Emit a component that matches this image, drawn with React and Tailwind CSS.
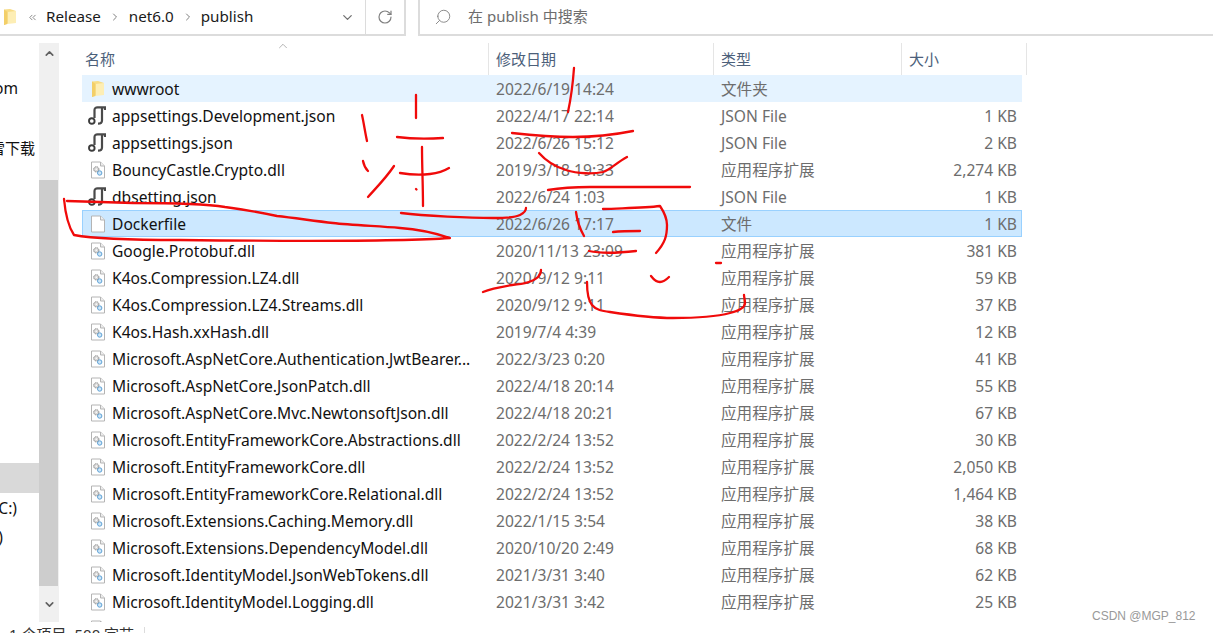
import { ChevronDown, ChevronRight, ChevronUp, ChevronsLeft, RotateCw, Search } from "lucide-react";

const files = [
  ["wwwroot", "2022/6/19 14:24", "文件夹", "", "folder", "hover"],
  ["appsettings.Development.json", "2022/4/17 22:14", "JSON File", "1 KB", "json"],
  ["appsettings.json", "2022/6/26 15:12", "JSON File", "2 KB", "json"],
  ["BouncyCastle.Crypto.dll", "2019/3/18 19:33", "应用程序扩展", "2,274 KB", "dll"],
  ["dbsetting.json", "2022/6/24 1:03", "JSON File", "1 KB", "json"],
  ["Dockerfile", "2022/6/26 17:17", "文件", "1 KB", "file", "selected"],
  ["Google.Protobuf.dll", "2020/11/13 23:09", "应用程序扩展", "381 KB", "dll"],
  ["K4os.Compression.LZ4.dll", "2020/9/12 9:11", "应用程序扩展", "59 KB", "dll"],
  ["K4os.Compression.LZ4.Streams.dll", "2020/9/12 9:11", "应用程序扩展", "37 KB", "dll"],
  ["K4os.Hash.xxHash.dll", "2019/7/4 4:39", "应用程序扩展", "12 KB", "dll"],
  ["Microsoft.AspNetCore.Authentication.JwtBearer...", "2022/3/23 0:20", "应用程序扩展", "41 KB", "dll"],
  ["Microsoft.AspNetCore.JsonPatch.dll", "2022/4/18 20:14", "应用程序扩展", "55 KB", "dll"],
  ["Microsoft.AspNetCore.Mvc.NewtonsoftJson.dll", "2022/4/18 20:21", "应用程序扩展", "67 KB", "dll"],
  ["Microsoft.EntityFrameworkCore.Abstractions.dll", "2022/2/24 13:52", "应用程序扩展", "30 KB", "dll"],
  ["Microsoft.EntityFrameworkCore.dll", "2022/2/24 13:52", "应用程序扩展", "2,050 KB", "dll"],
  ["Microsoft.EntityFrameworkCore.Relational.dll", "2022/2/24 13:52", "应用程序扩展", "1,464 KB", "dll"],
  ["Microsoft.Extensions.Caching.Memory.dll", "2022/1/15 3:54", "应用程序扩展", "38 KB", "dll"],
  ["Microsoft.Extensions.DependencyModel.dll", "2020/10/20 2:49", "应用程序扩展", "68 KB", "dll"],
  ["Microsoft.IdentityModel.JsonWebTokens.dll", "2021/3/31 3:40", "应用程序扩展", "62 KB", "dll"],
  ["Microsoft.IdentityModel.Logging.dll", "2021/3/31 3:42", "应用程序扩展", "25 KB", "dll"],
  ["", "", "", "", "dll"],
];

// hand-drawn red marks, in page coordinates
const marks = [
  "M416 95 L416 118",
  "M574 68 C573 82 571 98 568 112",
  "M362 115 C364 124 365 132 367 141",
  "M363 161 C364 166 366 169 368 171",
  "M394 166 C386 178 376 188 368 197",
  "M397 137 C412 139 428 139 443 138",
  "M422 147 C422 166 423 186 423 206",
  "M400 173 C412 175 422 175 430 174 C438 173 444 171 449 168",
  "M416 189 L416.5 189.5",
  "M401 213 C425 216 470 218 493 218 C505 218 516 217 520 215 C524 213 526 210 526 208",
  "M512 133 C530 135 555 137 573 137 C595 137 618 134 633 131",
  "M539 153 C546 161 556 167 566 170 C578 174 594 174 603 172 C610 170 616 163 627 157",
  "M548 190 C560 188 575 187 590 187 L690 187",
  "M603 209 C625 208 645 208 660 206 C664 212 667 218 667 225 C667 236 665 243 656 253",
  "M576 212 C577 220 580 229 584 236",
  "M613 232 C622 231 632 231 640 231",
  "M589 251 C598 253 618 253 636 251",
  "M716 263 L721 263",
  "M651 276 C654 280 657 282 660 282 C664 282 667 279 669 277",
  "M483 292 C490 289 500 287 512 285 C525 284 534 281 538 277 C540 275 541 272 541 270",
  "M587 282 C587 292 588 300 592 305 C596 310 602 311 610 312 C630 315 655 318 673 318 C695 318 715 317 730 313 C738 311 745 308 745 303 C745 300 744 297 744 295",
  "M64 199 C65 210 68 226 74 235 C95 239 130 240 180 240 C270 241 395 242 450 238 C435 233 415 229 400 228 C375 226 350 225 333 223 C315 221 295 218 277 216 C258 212 240 209 225 207 C200 203 165 203 133 203 L67 201",
];

function FolderIcon() {
  return (
    <svg width="14" height="18" viewBox="0 0 14 18">
      <path d="M1 1.5 L7 1 L13 3 L13 15 L5 15 L1 17 Z" fill="#f8dc85" />
      <path d="M4.5 4 L13 3 L13 15 L4.5 16 Z" fill="#fdeeb5" />
      <path d="M1 1.5 L4.5 4 L4.5 16 L1 17 Z" fill="#f3cf68" />
    </svg>
  );
}

function JsonIcon() {
  return (
    <svg width="18" height="19" viewBox="0 0 18 19" fill="none" className="-ml-[2px]">
      <path d="M6.5 12 L6.5 4 C6.5 2.3 7.7 1.3 9.5 1.3 L17 1.3 L17 4" stroke="#4a4a4a" strokeWidth="2.2" />
      <path d="M14 2 L14 14.5 C14 16.5 12.5 17.6 10 17.6" stroke="#4a4a4a" strokeWidth="2.2" />
      <circle cx="3.8" cy="15" r="2.8" fill="#fff" stroke="#3c3c3c" strokeWidth="1.9" />
    </svg>
  );
}

function PageIcon({ children }) {
  return (
    <svg width="16" height="18" viewBox="0 0 16 18" fill="none">
      <path d="M1.5 1 L10.5 1 L14.5 5 L14.5 17 L1.5 17 Z" fill="#fff" stroke="#b4b4b4" />
      <path d="M10.5 1 L10.5 5 L14.5 5" fill="#eee" stroke="#b4b4b4" />
      {children}
    </svg>
  );
}

function DllIcon() {
  return (
    <PageIcon>
      <circle cx="6.3" cy="8.3" r="2.6" fill="#d8d8d8" stroke="#8c8c8c" strokeDasharray="1.5 0.6" />
      <circle cx="6.3" cy="8.3" r="0.8" fill="#fff" />
      <circle cx="9.7" cy="12" r="2.2" fill="#cfe6f7" stroke="#5ea2d6" />
    </PageIcon>
  );
}

function FileIcon({ type }) {
  if (type === "folder") return <FolderIcon />;
  if (type === "json") return <JsonIcon />;
  if (type === "dll") return <DllIcon />;
  return <PageIcon />;
}

function HeaderCell({ label, className }) {
  return (
    <div className={"flex h-[32px] items-center border-r border-[#e5e5e5] text-[15px] text-[#4c607a] " + className}>
      {label}
    </div>
  );
}

function FileRow({ name, date, type, size, icon, state }) {
  let bg = "border-transparent";
  if (state === "hover") bg = "border-transparent bg-[#e5f3ff]";
  if (state === "selected") bg = "border-[#99d1ff] bg-[#cce8ff]";

  return (
    <div className={"flex h-[27px] w-[940px] items-center border " + bg}>
      <div className="flex w-[406px] items-center">
        <span className="flex w-[29px] shrink-0 justify-center pl-[1px]">
          <FileIcon type={icon} />
        </span>
        <span className="whitespace-nowrap pt-[2px] text-[#111]">{name}</span>
      </div>
      <div className="w-[225px] pt-[2px] pl-[7px] text-[#6d6d6d]">{date}</div>
      <div className="w-[188px] pt-[2px] pl-[7px] text-[#6d6d6d]">{type}</div>
      <div className="w-[115px] pt-[2px] text-right text-[#6d6d6d]">{size}</div>
    </div>
  );
}

export default function App() {
  return (
    <div className="relative flex h-[633px] w-[1213px] flex-col overflow-hidden bg-white font-['Noto_Sans','Noto_Sans_CJK_SC',sans-serif] text-[15.6px] leading-none">
      <header className="flex h-[36px] shrink-0 items-stretch text-[15.2px]">
        <div className="flex w-[406px] items-center border-r-2 border-b-2 border-[#dcdcdc]">
          <span className="ml-[3px] flex w-[14px] justify-center">
            <FolderIcon />
          </span>
          <ChevronsLeft size={11} className="ml-[10px] text-[#808080]" />
          <span className="ml-[8px] -mt-[1px] text-[#1a1a1a]">Release</span>
          <ChevronRight size={12} strokeWidth={2} className="ml-[8px] text-[#808080]" />
          <span className="ml-[8px] -mt-[1px] text-[#1a1a1a]">net6.0</span>
          <ChevronRight size={12} strokeWidth={2} className="ml-[8px] text-[#808080]" />
          <span className="ml-[7px] -mt-[1px] text-[#1a1a1a]">publish</span>
          <span className="flex-1" />
          <ChevronDown size={15} strokeWidth={2} className="mr-[10px] text-[#707070]" />
          <span className="flex h-full w-[39px] items-center justify-center border-l border-[#dcdcdc]">
            <RotateCw size={16} strokeWidth={1.8} className="text-[#808080]" />
          </span>
        </div>
        <div className="w-[12px]" />
        <div className="flex flex-1 items-center border-b-2 border-l-2 border-[#dcdcdc]">
          <Search size={18} strokeWidth={1.2} className="ml-[14px] -scale-x-100 text-[#808080]" />
          <span className="ml-[16px] -mt-[2px] text-[15px] text-[#6d6d6d]">在 publish 中搜索</span>
        </div>
      </header>

      <main className="flex min-h-0 flex-1">
        <aside className="flex w-[39px] shrink-0 flex-col overflow-hidden text-[#111]">
          <div className="mt-[45px] flex h-[16px] items-center justify-end pr-[21px] whitespace-nowrap">
            <span>.com</span>
          </div>
          <div className="mt-[43px] flex h-[16px] items-center justify-end pr-[4px] whitespace-nowrap text-[15px]">
            <span className="shrink-0">迅雷下载</span>
          </div>
          <div className="mt-[307px] h-[30px] bg-[#d9d9d9]" />
          <div className="mt-[8px] flex h-[16px] items-center justify-end pr-[22px] whitespace-nowrap">
            <span className="shrink-0">(C:)</span>
          </div>
          <div className="mt-[13px] flex h-[16px] items-center justify-end pr-[36px] whitespace-nowrap">
            <span className="shrink-0">)</span>
          </div>
        </aside>

        <div className="mt-[7px] flex h-[579px] w-[20px] shrink-0 flex-col bg-[#f0f0f0]">
          <div className="flex h-[20px] items-center justify-center">
            <ChevronUp size={13} strokeWidth={3} className="text-[#606060]" />
          </div>
          <div className="mt-[117px] h-[406px] w-[19px] bg-[#cdcdcd]" />
          <div className="flex flex-1 items-center justify-center">
            <ChevronDown size={13} strokeWidth={3} className="text-[#606060]" />
          </div>
        </div>

        <section className="relative ml-[23px] min-w-0 flex-1 overflow-hidden">
          <div className="mt-[7px] flex">
            <HeaderCell label="名称" className="w-[407px] pl-[3px]" />
            <HeaderCell label="修改日期" className="w-[225px] pl-[7px]" />
            <HeaderCell label="类型" className="w-[188px] pl-[7px]" />
            <HeaderCell label="大小" className="w-[125px] pl-[7px]" />
          </div>
          <ChevronUp size={14} strokeWidth={1} className="absolute top-[3px] left-[194px] text-[#808080]" />
          {files.map((f, i) => (
            <FileRow key={i} name={f[0]} date={f[1]} type={f[2]} size={f[3]} icon={f[4]} state={f[5]} />
          ))}
        </section>
      </main>

      <footer className="flex h-[11px] shrink-0 items-start pt-[5px] pl-[9px] whitespace-nowrap text-[15px] text-[#333]">
        <span>1 个项目</span>
        <span className="ml-[8px]">500 字节</span>
        <span className="ml-[10px] h-[11px] border-l border-[#dcdcdc]" />
      </footer>

      <svg width="1213" height="633" viewBox="0 0 1213 633" fill="none" className="pointer-events-none absolute inset-0">
        {marks.map((d, i) => (
          <path key={i} d={d} stroke="#f00a0a" strokeWidth="2.3" strokeLinecap="round" strokeLinejoin="round" />
        ))}
      </svg>

      <span className="absolute top-[610px] left-[1092px] font-['Liberation_Sans',sans-serif] text-[12px] text-[#999]">
        CSDN @MGP_812
      </span>
    </div>
  );
}
